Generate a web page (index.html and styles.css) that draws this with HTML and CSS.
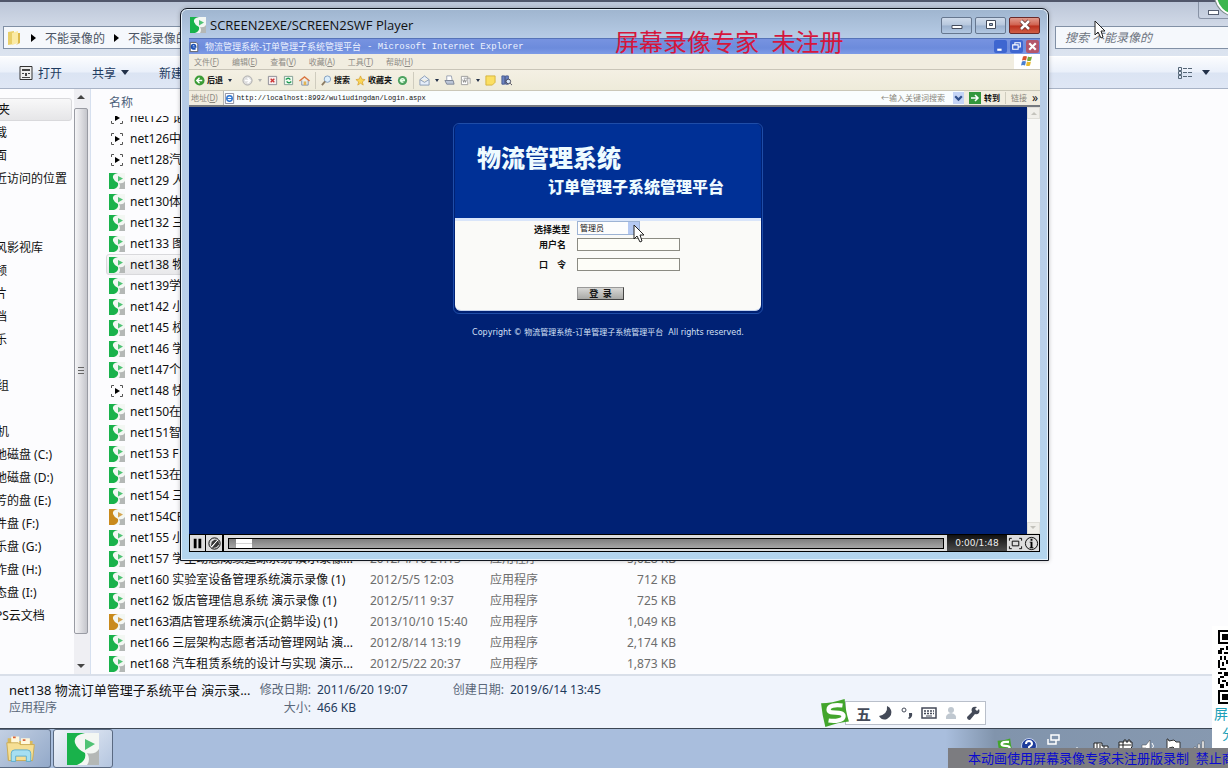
FILE: index.html
```
<!DOCTYPE html>
<html lang="zh-CN">
<head>
  <meta charset="UTF-8">
  <meta name="viewport" content="width=device-width, initial-scale=1.0">
  <title>SCREEN2EXE/SCREEN2SWF Player</title>
  <link rel="stylesheet" href="styles.css">
</head>
<body>
<svg class="sprite" aria-hidden="true">
  <symbol id="i-app" viewBox="0 0 16 16">
    <path fill="#f3f7f3" d="M0 0h16v16H0z"/>
    <path fill="#b4b8b6" d="M10 10q4 1 6-2v8h-6q2-3 0-6z"/>
    <path fill="currentColor" d="M0 0h9Q3 1 4 5q1 3 5 5 1 4-4 6H0z"/>
    <path fill="currentColor" opacity=".75" d="M9 3l5 2.500-5 3z"/>
  </symbol>
  <symbol id="i-play" viewBox="0 0 16 16">
    <path fill="none" stroke="#555" d="M2.500 5V2.500H5M11 2.500h2.500V5M13.500 11v2.500H11M5 13.500H2.500V11"/>
    <path d="M6 5l5 3-5 3z"/>
  </symbol>
  <symbol id="i-cursor" viewBox="0 0 13 20">
    <path fill="#fff" stroke="#222" d="M1 1v14l3-3 3 6 2-1-2-6h4z"/>
  </symbol>
  <symbol id="i-sogou" viewBox="0 0 28 28">
    <path fill="#43a52c" d="M1 5q10 0 22-4 1 12 4 21-10 1-22 5Q2 16 1 5z"/>
    <path fill="none" stroke="#fff" stroke-width="4" d="M21 7C14 6 8 7 8 11c0 5 14 0 14 6 0 4-8 5-14 4"/>
  </symbol>
</svg>

<div class="desktop">
  <div class="explorer">
    <header class="address-row">
      <nav class="path-bar">
        <svg class="icon" viewBox="0 0 16 16"><path fill="#e9cf6a" d="M2 2l6-1v13l-6 1z"/><path fill="#fbeaa4" d="M6 3l6-2v12l-6 2z"/><path fill="#dcb94e" d="M12 3h2v10l-4 2 2-2z"/></svg>
        <span class="crumb-arrow"></span>
        <a href="#">不能录像的</a>
        <span class="crumb-arrow"></span>
        <a href="#">不能录像的</a>
      </nav>
      <input class="search-box" type="text" placeholder="搜索 不能录像的" aria-label="搜索">
      <button class="min-btn" aria-label="最小化"><span></span></button>
    </header>

    <div class="toolbar">
      <button><svg class="icon" viewBox="0 0 16 16"><path fill="#eee" stroke="#333" d="M2 1.500h12v13H2z"/><path fill="#444" d="M4 4h8v2H4zM4 8h2v1H4zM7 8h2v3H7zM10 8h2v1h-2zM4 12h8v1H4z"/></svg>打开</button>
      <button class="share">共享<span class="caret"></span></button>
      <button>新建文件夹</button>
      <button class="view-btn" aria-label="视图"><svg class="icon" viewBox="0 0 16 16"><path fill="none" stroke="#567" d="M1.500 2.500h3v3h-3zM1.500 6.500h3v3h-3zM1.500 10.500h3v3h-3z"/><path stroke="#567" d="M6 3.500h4M11 3.500h4M6 7.500h4M11 7.500h4M6 11.500h4M11 11.500h4"/></svg><span class="caret"></span></button>
    </div>

    <div class="explorer-body">
      <ul class="tree">
        <li class="group active">夹</li>
        <li>载</li>
        <li>面</li>
        <li>近访问的位置</li>
        <li></li>
        <li></li>
        <li>风影视库</li>
        <li>频</li>
        <li>片</li>
        <li>档</li>
        <li>乐</li>
        <li></li>
        <li class="group">组</li>
        <li></li>
        <li class="group">机</li>
        <li>地磁盘 (C:)</li>
        <li>地磁盘 (D:)</li>
        <li>芳的盘 (E:)</li>
        <li>件盘 (F:)</li>
        <li>乐盘 (G:)</li>
        <li>作盘 (H:)</li>
        <li>态盘 (I:)</li>
        <li>PS云文档</li>
      </ul>
      <div class="tree-scroll">
        <span class="arrow up"></span>
        <div class="thumb"><i></i></div>
        <span class="arrow down"></span>
      </div>
      <table class="files">
        <thead><tr><th>名称</th></tr></thead>
        <tbody id="file-rows"></tbody>
      </table>
    </div>

    <footer class="details">
      <div class="detail-name">
        <strong>net138 物流订单管理子系统平台 演示录...</strong>
        <span>应用程序</span>
      </div>
      <dl>
        <dt>修改日期:</dt><dd>2011/6/20 19:07</dd>
        <dt>大小:</dt><dd>466 KB</dd>
      </dl>
      <dl>
        <dt>创建日期:</dt><dd>2019/6/14 13:45</dd>
      </dl>
    </footer>
  </div>

  <div class="taskbar">
    <button class="task" aria-label="资源管理器">
      <svg viewBox="0 0 36 34"><path fill="#d9b95c" d="M3 5h9l2 3h17v22H3z"/><path fill="#fff8dc" d="M7 3h9v8H7zM18 5h10v8H18z"/><path fill="#f6df94" stroke="#c9a850" d="M2 10h13l2 2h16l-2 18H4z"/><path fill="#d9653b" d="M9 3h3v2H9zM20 6h3v2h-3z"/><path fill="#a6dff2" stroke="#58a9cc" d="M7 31v-9q0-4 4-4h14q4 0 4 4v9h-5v-6H12v6z"/></svg>
    </button>
    <button class="task running" aria-label="播放器"><svg class="green" viewBox="0 0 16 16"><use href="#i-app"/></svg></button>
    <div class="tray">
      <svg viewBox="0 0 28 28"><use href="#i-sogou"/></svg>
      <svg viewBox="0 0 16 16"><circle cx="8" cy="8" r="7.500" fill="#1d3c9b" stroke="#c6d2ee"/><path fill="none" stroke="#fff" stroke-width="2" d="M5 6q0-3 3-3t3 3q0 1-3 3v1M8 12v2"/></svg>
      <svg class="raised" viewBox="0 0 16 16"><path fill="none" stroke="#fff" stroke-width="1.500" d="M6 3h8v5H6zM3 7v5h8V8"/></svg>
      <svg viewBox="0 0 16 16"><path fill="#fff" d="M8 9l4 4H4z"/></svg>
      <svg viewBox="0 0 16 16"><path fill="#fff" stroke="#222" d="M1 5h8v3h6v6H5l-4-4z"/><path stroke="#222" d="M4 5v7M7 6v7M11 8v6"/></svg>
      <svg viewBox="0 0 16 16"><path fill="#fff" stroke="#222" d="M2 4h5V2h2v2h2V2h2v2h2v5l-3 3H2z"/><path stroke="#222" d="M2 7h12M6 4v8"/></svg>
      <svg viewBox="0 0 16 16"><path fill="#fff" stroke="#444" stroke-width=".5" d="M1 7h4l4-5v12l-4-4H1z"/><path fill="none" stroke="#fff" d="M11 5q3 3 0 6"/></svg>
      <svg viewBox="0 0 16 16"><path fill="#fff" stroke="#333" d="M2 1h1l1 2 5-1 2 2h4v7h-5L8 9 4 10v5H2z"/></svg>
      <svg viewBox="0 0 16 16"><path fill="#fff" stroke="#555" stroke-width=".5" d="M1 12h2v3H1zM5 9h2v6H5zM9 6h2v9H9zM13 3h2v12h-2z"/></svg>
    </div>
  </div>

  <section class="player">
    <header class="player-title">
      <svg class="green" viewBox="0 0 16 16"><use href="#i-app"/></svg>
      <h1>SCREEN2EXE/SCREEN2SWF Player</h1>
      <button aria-label="最小化"><svg viewBox="0 0 16 12"><path fill="#fff" stroke="#444c5c" d="M3 6.500h10v3H3z"/></svg></button>
      <button aria-label="最大化"><svg viewBox="0 0 16 12"><path fill="#fff" stroke="#444c5c" d="M3.500 1.500h9v8h-9z"/><path fill="#9fb4cf" stroke="#444c5c" d="M6.500 4.500h3v2h-3z"/></svg></button>
      <button class="close" aria-label="关闭"><svg viewBox="0 0 16 12"><path stroke="#5a3030" stroke-width="4" d="M4 2l8 8M12 2l-8 8"/><path stroke="#fff" stroke-width="2.500" d="M4 2l8 8M12 2l-8 8"/></svg></button>
    </header>

    <div class="ie">
      <div class="ie-title">
        <svg viewBox="0 0 12 12"><path fill="#fff" stroke="#555" d="M1.500.5h7l2 2v9h-9z"/><path fill="none" stroke="#1c51b5" stroke-width="2" d="M3 6h5q0-3-2.500-3T3 6t5 2"/></svg>
        <span>物流管理系统-订单管理子系统管理平台</span>
        <span class="latin">- Microsoft Internet Explorer</span>
        <div class="ie-buttons">
          <button aria-label="最小化"><svg viewBox="0 0 12 12"><path fill="#fff" d="M3 8h4v2H3z"/></svg></button>
          <button aria-label="还原"><svg viewBox="0 0 12 12"><path fill="none" stroke="#fff" d="M4.500 4V2.500h5v4H8M2.500 4.500h5v4h-5z"/></svg></button>
          <button class="close" aria-label="关闭"><svg viewBox="0 0 12 12"><path stroke="#fff" stroke-width="2" d="M3 3l6 6M9 3l-6 6"/></svg></button>
        </div>
      </div>

      <div class="ie-menu">
        <a href="#">文件(<u>F</u>)</a>
        <a href="#">编辑(<u>E</u>)</a>
        <a href="#">查看(<u>V</u>)</a>
        <a href="#">收藏(<u>A</u>)</a>
        <a href="#">工具(<u>T</u>)</a>
        <a href="#">帮助(<u>H</u>)</a>
        <div class="flag"><svg viewBox="0 0 14 14"><path fill="#d9532c" d="M3 2q2-1 4 0L6 6Q4 5 2 6z"/><path fill="#77a83a" d="M8 2q2 1 4 0l-1 4q-2 1-4 0z"/><path fill="#4a7fd0" d="M2 7q2-1 4 0l-1 4q-2-1-4 0z"/><path fill="#e8b92e" d="M7 7q2 1 4 0l-1 4q-2 1-4 0z"/></svg></div>
      </div>

      <div class="ie-tools">
        <button><svg viewBox="0 0 12 12"><circle cx="6" cy="6" r="5.500" fill="#3b9c35"/><path fill="none" stroke="#fff" stroke-width="1.500" d="M9 6H3M6 3L3 6l3 3"/></svg>后退</button>
        <span class="caret back-list"></span>
        <button aria-label="前进"><svg viewBox="0 0 12 12"><circle cx="6" cy="6" r="5" fill="#ddd" stroke="#aaa"/><path fill="none" stroke="#fff" stroke-width="1.500" d="M3 6h6M6 3l3 3-3 3"/></svg></button>
        <span class="caret faded"></span>
        <button aria-label="停止"><svg viewBox="0 0 12 12"><path fill="#f7eeee" stroke="#8a8a94" d="M1.500 1.500h9v9h-9z"/><path stroke="#c33" stroke-width="1.500" d="M4 4l4 4M8 4L4 8"/></svg></button>
        <button aria-label="刷新"><svg viewBox="0 0 12 12"><path fill="#effaef" stroke="#7f9a90" d="M1.500 1.500h9v9h-9z"/><path fill="none" stroke="#1f9a52" stroke-width="1.500" d="M3 5q3-3 5 0M9 7q-3 3-5 0"/></svg></button>
        <button aria-label="主页"><svg viewBox="0 0 12 12"><path fill="#e8f0fa" stroke="#7c8ba4" d="M3 6v5h7V6"/><path fill="#d9733e" d="M6 1l6 5-1 1-5-4-5 4-1-1z"/><path fill="#e3b454" d="M5 7h3v4H5z"/></svg></button>
        <i class="sep"></i>
        <button><svg viewBox="0 0 12 12"><circle cx="7" cy="4.500" r="3.500" fill="#dceefb" stroke="#7e9bbd"/><path stroke="#8b7b62" stroke-width="2" d="M4.500 7L1 11"/></svg>搜索</button>
        <button><svg viewBox="0 0 12 12"><path fill="#fbd656" stroke="#d29a25" stroke-width=".7" d="M6 1l1.500 3.500L11 5 8 7.500 9 11 6 9l-3 2 1-3.500L1 5l3.500-.5z"/></svg>收藏夹</button>
        <button aria-label="历史"><svg viewBox="0 0 12 12"><circle cx="6" cy="6" r="5" fill="#4ca15f"/><path fill="none" stroke="#e8ffe8" stroke-width="1.500" d="M3 6h5q0-2-2-2T4 6t3 2"/></svg></button>
        <i class="sep"></i>
        <button aria-label="邮件"><svg viewBox="0 0 12 12"><path fill="#e6eefa" stroke="#8799b4" d="M1 5l5-4 5 4v6H1zM1 5l5 3 5-3"/></svg></button>
        <span class="caret"></span>
        <button aria-label="打印"><svg viewBox="0 0 12 12"><path fill="#fff" stroke="#98a0b0" d="M3 1h5l1 5H3z"/><path fill="#bcc6d8" stroke="#7b8394" d="M1 6h9l1 4H3z"/></svg></button>
        <button aria-label="编辑"><svg viewBox="0 0 12 12"><path fill="#fff" stroke="#999" d="M1.500 1.500h7v9h-7zM4 3.500h7v6"/><path fill="none" stroke="#888" d="M3 5l1 3 1-3 1 3 1-3"/></svg></button>
        <span class="caret"></span>
        <button aria-label="便笺"><svg viewBox="0 0 12 12"><path fill="#fbdf62" stroke="#d5b23a" d="M1 1h10v7l-3 3H1z"/></svg></button>
        <button aria-label="信息检索"><svg viewBox="0 0 12 12"><path fill="#6c84c4" stroke="#46598c" d="M1 1h3v9H1zM5 1h3v9H5z"/><circle cx="8" cy="7" r="2.500" fill="#d9e8fa" stroke="#445"/><path stroke="#445" d="M10 9l2 2"/></svg></button>
      </div>

      <div class="ie-address">
        <label for="url">地址(<u>D</u>)</label>
        <div class="url-field">
          <svg viewBox="0 0 12 12"><path fill="#fff" stroke="#889" d="M1.500.5h9v11h-9z"/><circle cx="6" cy="6" r="3" fill="none" stroke="#2b73d1" stroke-width="1.500"/><path stroke="#2b73d1" d="M3 6h6"/></svg>
          <input id="url" type="text" value="http://localhost:8992/wuliudingdan/Login.aspx">
          <span class="hint">←输入关键词搜索</span>
          <button class="drop" aria-label="展开"><svg viewBox="0 0 10 10"><path fill="none" stroke="#31508c" stroke-width="2" d="M2 3l3 3 3-3"/></svg></button>
        </div>
        <button class="go"><svg viewBox="0 0 12 12"><path fill="#33973c" d="M0 0h12v12H0z"/><path fill="none" stroke="#fff" stroke-width="1.500" d="M2 6h7M6 3l3 3-3 3"/></svg>转到</button>
        <a href="#">链接</a>
        <span class="more">»</span>
      </div>

      <div class="ie-view">
        <main class="page">
          <div class="card">
            <div class="banner">
              <h2>物流管理系统</h2>
              <h3>订单管理子系统管理平台</h3>
            </div>
            <form class="login" onsubmit="return false">
              <label for="role">选择类型</label>
              <select id="role"><option>管理员</option></select>
              <label for="user">用户名</label>
              <input id="user" type="text">
              <label for="pass" class="spaced"><span>口</span><span>令</span></label>
              <input id="pass" type="password">
              <button type="submit">登&nbsp; 录</button>
            </form>
          </div>
          <p class="copyright">Copyright © 物流管理系统-订单管理子系统管理平台&nbsp; All rights reserved.</p>
          <svg class="page-cursor"><use href="#i-cursor"/></svg>
        </main>
        <div class="page-scroll"><span></span><span class="flip"></span></div>
      </div>
    </div>

    <div class="controls">
      <button aria-label="暂停"><svg viewBox="0 0 16 16"><path d="M4 3h3v10H4zM9 3h3v10H9z"/></svg></button>
      <button aria-label="停止"><svg viewBox="0 0 16 16"><circle cx="8" cy="8" r="6" fill="none" stroke="#000"/><path d="M4 12l1-6 3-2h3zM12 4l1 5-3 3-5 1z" opacity=".75"/><path stroke="#fff" d="M4 12l8-8"/></svg></button>
      <div class="track"><input type="range" min="0" max="100" value="1" aria-label="进度"></div>
      <output>0:00/1:48</output>
      <button aria-label="全屏"><svg viewBox="0 0 16 16"><path fill="none" stroke="#000" d="M4.500 5.500h7v5h-7zM1.500 5V2.500H4M12 2.500h2.500V5M14.500 11v2.500H12M4 13.500H1.500V11"/></svg></button>
      <button aria-label="信息"><svg viewBox="0 0 16 16"><circle cx="8" cy="8" r="6.500" fill="none" stroke="#000"/><path d="M7 3h2v2H7zM6 6h3v6h1v1H6v-1h1V7H6z"/></svg></button>
    </div>
  </section>

  <div class="red-mark">屏幕录像专家  未注册</div>

  <div class="ime">
    <svg class="ime-logo" viewBox="0 0 28 28"><use href="#i-sogou"/></svg>
    <div class="ime-bar">
      <b>五</b>
      <svg viewBox="0 0 16 16"><path fill="#444a58" d="M10 1q1 8-8 10 3 5 8 3 6-4 4-9-1-3-4-4z"/></svg>
      <svg viewBox="0 0 16 16"><circle cx="5" cy="5" r="2" fill="none" stroke="#444a58"/><path fill="#444a58" d="M10 8h3q1 4-3 6l-1-1q2-1 1-3z"/></svg>
      <svg viewBox="0 0 16 16"><path fill="none" stroke="#444a58" stroke-width="1.500" d="M1 3h14v10H1z"/><path stroke="#444a58" stroke-width="1.500" stroke-dasharray="2 1" d="M3 6h10M3 8.500h10"/><path stroke="#444a58" d="M5 11h6"/></svg>
      <svg viewBox="0 0 16 16"><circle cx="8" cy="5" r="3" fill="#c0c8d0"/><path fill="#c0c8d0" d="M3 14q-1-5 5-6 6 1 5 6z"/></svg>
      <svg viewBox="0 0 16 16"><path fill="#444a58" d="M14 4l-2 2-2-2 2-2q-3-1-5 1-1 2 0 4l-5 5q0 3 3 3l5-6q2 1 4-1 1-2 0-4z"/></svg>
    </div>
  </div>

  <aside class="qr">
    <svg viewBox="0 0 10 74"><path fill="none" stroke="#000" stroke-width="2" d="M14 1H1v12h13M14 61H1v12h13"/><path d="M4 4h6v6H4zM4 64h6v6H4zM2 18h4v2H2zM8 16h2v4H8zM0 20h4v4H0zM6 22h4v2H6zM2 26h2v4H2zM0 30h2v8H0zM6 26h2v4H6zM8 30h2v4H8zM4 32h2v4H4zM2 38h6v2H2zM0 42h4v2H0zM6 42h4v4H6zM2 46h4v2H2zM0 48h2v6H0zM4 50h4v2H4zM8 52h2v4H8zM2 54h4v4H2z"/></svg>
    <span>屏</span>
    <span>分</span>
  </aside>

  <div class="notice">本动画使用屏幕录像专家未注册版录制  禁止商</div>
  <div class="ball"></div>
  <svg class="desk-cursor"><use href="#i-cursor"/></svg>
</div>

<script>
const files = [
  ['play', 'net125 论'],
  ['play', 'net126中'],
  ['play', 'net128汽'],
  ['green', 'net129 人'],
  ['green', 'net130体'],
  ['green', 'net132 三'],
  ['green', 'net133 图'],
  ['green', 'net138 物'],
  ['green', 'net139学'],
  ['green', 'net142 小'],
  ['green', 'net145 校'],
  ['green', 'net146 学'],
  ['green', 'net147个'],
  ['play', 'net148 快'],
  ['green', 'net150在'],
  ['green', 'net151智'],
  ['green', 'net153 F'],
  ['green', 'net153在'],
  ['green', 'net154 三'],
  ['orange', 'net154CR'],
  ['green', 'net155 小'],
  ['green', 'net157 学生动态成绩追踪系统 演示录像...', '2012/4/16 21:13', '应用程序', '5,028 KB'],
  ['green', 'net160 实验室设备管理系统演示录像 (1)', '2012/5/5 12:03', '应用程序', '712 KB'],
  ['green', 'net162 饭店管理信息系统 演示录像 (1)', '2012/5/11 9:37', '应用程序', '725 KB'],
  ['orange', 'net163酒店管理系统演示(企鹅毕设) (1)', '2013/10/10 15:40', '应用程序', '1,049 KB'],
  ['green', 'net166 三层架构志愿者活动管理网站 演...', '2012/8/14 13:19', '应用程序', '2,174 KB'],
  ['green', 'net168 汽车租赁系统的设计与实现 演示...', '2012/5/22 20:37', '应用程序', '1,873 KB']
];

document.getElementById('file-rows').innerHTML = files.map(([kind, name, date = '', type = '', size = '']) => `
  <tr class="${name.startsWith('net138') ? 'selected' : ''}">
    <td class="name"><svg class="${kind}" viewBox="0 0 16 16"><use href="#i-${kind === 'play' ? 'play' : 'app'}"/></svg>${name}</td>
    <td>${date}</td>
    <td>${type}</td>
    <td class="size">${size}</td>
  </tr>`).join('');
</script>
</body>
</html>
```
FILE: styles.css
```
* {
  box-sizing: border-box;
}
body {
  margin: 0;
  font-family: "Noto Sans", "Noto Sans CJK SC", sans-serif;
  font-size: 12px;
  color: #111;
}
button, input, select {
  font: inherit;
  color: inherit;
  margin: 0;
  padding: 0;
  border: 0;
  background: none;
}
a {
  color: inherit;
  text-decoration: none;
}
h1, h2, h3, p, ul, dl, dd {
  margin: 0;
  padding: 0;
}
svg {
  flex: none;
  display: block;
}
.sprite {
  position: absolute;
  width: 0;
  height: 0;
}
.icon {
  width: 16px;
  height: 16px;
}
.green {
  color: #19b24b;
}
.orange {
  color: #c98a1c;
}
.caret {
  border: 4px solid transparent;
  border-top: 5px solid #223048;
  border-bottom: 0;
}
.desktop {
  position: relative;
  height: 100vh;
  overflow: hidden;
  display: flex;
  flex-direction: column;
}

/* explorer window */
.explorer {
  flex: 1;
  min-height: 0;
  display: flex;
  flex-direction: column;
  background: #fcfcfe;
  border-top: 2px solid #50566a;
}
.address-row {
  height: 54px;
  display: flex;
  align-items: flex-end;
  padding: 0 0 7px 3px;
  background: linear-gradient(#bcc6d8, #d6deeb 55%, #dce4f0);
}
.path-bar, .search-box {
  height: 23px;
  border: 1px solid #8190a5;
  background: #f5f8fc;
}
.path-bar {
  flex: 1;
  display: flex;
  align-items: center;
  gap: 9px;
  padding-left: 2px;
  color: #4c5564;
}
.crumb-arrow {
  border: 4px solid transparent;
  border-left: 5px solid #000;
  border-right: 0;
}
.search-box {
  width: 185px;
  margin-left: 10px;
  margin-right: -12px;
  padding-left: 9px;
  font-style: italic;
}
.search-box::placeholder {
  color: #6d7480;
}
.min-btn {
  align-self: flex-start;
  width: 42px;
  height: 17px;
  margin: 0 -12px 0 -30px;
  padding: 8px 9px;
  border: 1px solid #8893a6;
  border-top: 0;
  border-radius: 0 0 0 3px;
}
.min-btn span {
  display: block;
  width: 11px;
  height: 5px;
  border: 1px solid #555e70;
  background: #fff;
}
.toolbar {
  height: 33px;
  display: flex;
  align-items: center;
  gap: 30px;
  padding: 0 18px;
  color: #1e3a5f;
  background: linear-gradient(#fbfcfe, #eaf0fa 48%, #dbe4f3 52%, #dfe7f5);
  border-top: 1px solid #fff;
  border-bottom: 1px solid #a8b3c6;
}
.toolbar button {
  display: flex;
  align-items: center;
  gap: 4px;
}
.toolbar .share {
  gap: 5px;
}
.toolbar .view-btn {
  margin-left: auto;
  gap: 9px;
}
.explorer-body {
  flex: 1;
  min-height: 0;
  display: flex;
}
.tree {
  width: 74px;
  padding-top: 9px;
  list-style: none;
  overflow: hidden;
}
.tree li {
  height: 23px;
  line-height: 23px;
  margin-left: -5px;
  white-space: nowrap;
}
.tree .group {
  margin-left: -3px;
}
.tree .active {
  margin-right: 2px;
  line-height: 21px;
  border: 1px solid #d9d9dc;
  border-radius: 3px;
  background: linear-gradient(#f8f8f9, #e6e6e8);
}
.tree-scroll {
  width: 17px;
  display: flex;
  flex-direction: column;
  align-items: center;
  padding: 6px 2px 6px 0;
  border-right: 1px solid #d6e0ef;
  background: #efeff3;
}
.arrow {
  border: 4px solid transparent;
}
.arrow.up {
  border-top: 0;
  border-bottom: 4px solid #444;
}
.arrow.down {
  border-bottom: 0;
  border-top: 4px solid #444;
}
.thumb {
  width: 14px;
  flex: 1;
  margin: 9px 0 30px;
  display: flex;
  align-items: center;
  justify-content: center;
  border: 1px solid #999ba3;
  border-radius: 2px;
  background: linear-gradient(90deg, #f5f5f7, #e0e0e4 45%, #c4c5cb);
}
.thumb i {
  width: 6px;
  height: 8px;
  background: repeating-linear-gradient(#666 0 1px, transparent 1px 3px);
}
.files {
  flex: 1;
  min-width: 0;
  display: flex;
  flex-direction: column;
  padding-left: 15px;
}
.files thead {
  display: block;
  height: 27px;
  line-height: 24px;
  padding-left: 1px;
  color: #4c607a;
}
.files th {
  padding: 0;
  font-weight: normal;
}
.files tbody {
  flex: 1;
  min-height: 0;
  display: flex;
  flex-direction: column;
  justify-content: flex-end;
  overflow: hidden;
}
.files tr {
  flex: none;
}
.files tbody tr {
  width: 573px;
  display: grid;
  grid-template-columns: 263px 120px 116px 70px;
  height: 21px;
  line-height: 19px;
  border: 1px solid transparent;
  border-radius: 3px;
}
.files .selected {
  border-color: #d9d9dc;
  background: linear-gradient(#f8f8f9, #e8e8ea);
}
.files td {
  padding: 0;
  color: #6d6d6d;
  white-space: nowrap;
}
.files .name {
  display: flex;
  align-items: center;
  gap: 5px;
  padding-left: 2px;
  color: #111;
}
.files .name svg {
  width: 16px;
  height: 16px;
}
.files .size {
  text-align: right;
}
.details {
  height: 54px;
  display: flex;
  align-items: flex-start;
  padding: 5px 9px;
  line-height: 18px;
  background: #f0f4fc;
  border-top: 2px solid #d9dfe9;
  color: #5a6779;
  white-space: nowrap;
}
.detail-name {
  width: 250px;
  display: flex;
  flex-direction: column;
}
.detail-name strong {
  font-size: 13px;
  font-weight: normal;
  color: #111;
}
.details dl {
  display: grid;
  grid-template-columns: 52px 135px;
  column-gap: 6px;
}
.details dt {
  text-align: right;
}
.details dd {
  color: #1e395b;
}

/* taskbar */
.taskbar {
  height: 40px;
  display: flex;
  gap: 2px;
  border-top: 1px solid #3c4654;
  background: linear-gradient(90deg, #a9bedd 77%, #8194ac 81%, #8799b0);
}
.task {
  width: 51px;
  display: flex;
  align-items: center;
  justify-content: center;
  padding-right: 9px;
  border: 1px solid #5a6a82;
  border-left: 0;
  border-radius: 0 3px 3px 0;
  background: linear-gradient(135deg, #c3d0e3, #93a9c9);
}
.task svg {
  width: 32px;
  height: 32px;
}
.task.running {
  width: 60px;
  padding: 0;
  border: 1px solid #5a6a82;
  border-radius: 3px;
  background: linear-gradient(135deg, #f0f4fa, #b4c5df);
}
.tray {
  margin-left: auto;
  display: flex;
  gap: 8px;
  padding: 9px 23px 0 0;
}
.tray svg {
  width: 16px;
  height: 16px;
}
.tray .raised {
  margin-top: -6px;
}

/* player window floating over the explorer */
.player {
  position: absolute;
  top: 8px;
  left: 180px;
  right: 179px;
  bottom: 207px;
  display: flex;
  flex-direction: column;
  padding: 1px 8px 8px;
  border: 1px solid #10151f;
  border-radius: 7px 7px 0 0;
  box-shadow: inset 0 0 0 1px #e6f1fb, 0 0 4px rgba(0,0,0,0.25);
  background: linear-gradient(#9fb5cf, #b6cbe5 28px, #bad0ea 60%, #b4d5ee);
}
.player-title {
  height: 28px;
  display: flex;
  align-items: center;
  gap: 3px;
  padding: 2px 0 0 1px;
}
.player-title > svg {
  width: 16px;
  height: 16px;
}
.player-title h1 {
  flex: 1;
  padding-left: 1px;
  font-family: "Open Sans", "Noto Sans", sans-serif;
  font-size: 13px;
  font-weight: normal;
}
.player-title button {
  width: 31px;
  height: 17px;
  display: flex;
  align-items: center;
  justify-content: center;
  border: 1px solid #66778f;
  border-radius: 2px;
  background: linear-gradient(#cfdbeb, #b6c7dd 48%, #9bb1ce 52%, #b3c8e2);
}
.player-title .close {
  border-color: #6b2a2a;
  background: linear-gradient(#e19a8d, #d0604d 48%, #bb2f1c 52%, #d05e46);
}
.player-title svg {
  width: 16px;
}
.ie {
  flex: 1;
  min-height: 0;
  display: flex;
  flex-direction: column;
  font-size: 8px;
  line-height: 12px;
  background: #f1ede0;
}
.ie-title {
  height: 16px;
  display: flex;
  align-items: center;
  gap: 6px;
  padding: 0 1px 0 0;
  font-size: 9px;
  color: #eef3ff;
  border-top: 1px solid #5573b8;
  background: linear-gradient(#7793e0, #6c8bdc 60%, #7d9be6);
  white-space: nowrap;
}
.ie-title > svg {
  width: 10px;
  height: 12px;
}
.ie-title .latin {
  font-family: "Liberation Mono", monospace;
}
.ie-buttons {
  margin-left: auto;
  display: flex;
  gap: 3px;
}
.ie-buttons button {
  width: 13px;
  height: 13px;
  border-radius: 2px;
  background: #3e66d0;
}
.ie-buttons .close {
  background: #b3566c;
}
.ie-menu {
  height: 16px;
  display: flex;
  align-items: center;
  gap: 13px;
  padding-left: 5px;
  color: #8e8c86;
  border-bottom: 1px solid #c9c5b8;
}
.flag {
  width: 26px;
  height: 15px;
  margin-left: auto;
  display: flex;
  justify-content: center;
  background: #fff;
}
.flag svg {
  width: 14px;
}
.ie-tools {
  height: 21px;
  display: flex;
  align-items: center;
  gap: 5px;
  padding-left: 5px;
  background: linear-gradient(#f4f0e4, #eeebda);
  border-bottom: 1px solid #cac7b8;
}
.ie-tools button {
  display: flex;
  align-items: center;
  gap: 2px;
  font-weight: bold;
}
.ie-tools svg {
  width: 11px;
  height: 11px;
}
.ie-tools .caret {
  border-width: 3px 2px 0;
}
.ie-tools .back-list {
  margin-right: 5px;
}
.ie-tools .faded {
  opacity: 0.3;
}
.sep {
  width: 1px;
  height: 17px;
  background: #cfccbe;
}
.ie-address {
  height: 16px;
  display: flex;
  align-items: center;
  gap: 5px;
  padding: 0 2px;
  color: #8a877d;
  border-bottom: 2px solid #767a80;
}
.url-field {
  flex: 1;
  align-self: stretch;
  display: flex;
  align-items: center;
  gap: 2px;
  background: #f9fdfe;
  border-left: 1px solid #b7b8b4;
}
.url-field svg {
  width: 11px;
  height: 11px;
}
.url-field input {
  flex: 1;
  min-width: 0;
  font-family: "Liberation Mono", monospace;
  font-size: 7px;
  color: #111;
}
.url-field .drop {
  width: 11px;
  height: 12px;
  margin-left: 6px;
  background: #c4d4f6;
}
.go {
  display: flex;
  align-items: center;
  gap: 3px;
  font-weight: bold;
  color: #111;
}
.go svg {
  width: 12px;
  height: 12px;
}
.ie-address > a {
  padding-left: 5px;
  border-left: 1px solid #cfccbe;
}
.more {
  font-size: 12px;
  color: #111;
}
.ie-view {
  flex: 1;
  min-height: 0;
  display: flex;
}
.page {
  position: relative;
  flex: 1;
  display: flex;
  flex-direction: column;
  align-items: center;
  padding-top: 16px;
  background: #002174;
}
.page-scroll {
  width: 13px;
  display: flex;
  flex-direction: column;
  justify-content: space-between;
  background: #f8f8f6;
}
.page-scroll span {
  height: 12px;
  border: 1px solid #dfded8;
  background: #f0efea;
  display: flex;
  align-items: center;
  justify-content: center;
}
.page-scroll span::before {
  content: "";
  border: 3px solid transparent;
  border-top: 0;
  border-bottom-color: #c4c3bc;
}
.page-scroll .flip {
  transform: rotate(180deg);
}

/* login card */
.card {
  width: 310px;
  padding: 0 1px 2px;
  border: 1px solid #1f4da8;
  border-radius: 6px;
}
.banner {
  height: 94px;
  padding: 16px 0 0 22px;
  color: #eefbff;
  border-radius: 5px 5px 0 0;
  background: #003096;
  white-space: nowrap;
}
.banner h2 {
  font-size: 24px;
  line-height: 36px;
  font-weight: 900;
}
.banner h3 {
  padding-left: 71px;
  font-size: 16px;
  line-height: 22px;
  font-weight: 900;
}
.login {
  display: grid;
  grid-template-columns: 115px 103px;
  column-gap: 7px;
  align-items: center;
  padding-bottom: 10px;
  font-size: 9px;
  background: #fafaf8;
  border-top: 3px solid #d9e5fa;
  border-bottom: 1px solid #c2d2ee;
  border-radius: 0 0 6px 6px;
}
.login label {
  justify-self: end;
  padding-right: 4px;
  font-weight: bold;
}
.login label[for="role"] {
  padding-right: 0;
}
.login .spaced {
  width: 31px;
  display: flex;
  justify-content: space-between;
}
.login input, .login select {
  height: 13px;
  border: 1px solid #8b8b83;
  background: #fdfdf8;
}
.login select {
  width: 63px;
  height: 14px;
  margin-bottom: 3px;
  padding-left: 2px;
  font-size: 8px;
  appearance: none;
  border-color: #9db3d4;
  background: linear-gradient(#b5c9f2, #b5c9f2) right / 11px 100% no-repeat #fdfdfd;
}
.login #pass {
  margin: 7px 0;
}
.login button {
  grid-column: 2;
  width: 47px;
  height: 13px;
  margin-top: 9px;
  line-height: 11px;
  font-weight: bold;
  border: 1px solid #444;
  border-top-color: #999;
  border-left-color: #999;
  background: linear-gradient(#d8d8d6, #a9a9a6);
}
.copyright {
  margin-top: 13px;
  font-family: "DejaVu Sans", "Noto Sans CJK SC", sans-serif;
  font-size: 8px;
  color: #d5e0f7;
  white-space: nowrap;
}
.page-cursor {
  position: absolute;
  top: 117px;
  left: 444px;
  width: 13px;
  height: 20px;
}

/* player controls */
.controls {
  height: 18px;
  display: flex;
  align-items: stretch;
  border: 1px solid #000;
  background: #dcdcdc;
}
.controls button {
  width: 16px;
  display: flex;
  align-items: center;
  justify-content: center;
}
.controls button:first-child {
  border-right: 1px solid #000;
}
.controls svg {
  width: 15px;
  height: 15px;
}
.track {
  flex: 1;
  display: flex;
  align-items: center;
  padding: 0 3px 0 4px;
  border-left: 2px solid #000;
}
.track input {
  width: 100%;
  height: 11px;
  appearance: none;
  border: 1px solid #000;
  background: linear-gradient(#7e7e7e, #a6a6a6);
}
.track input::-webkit-slider-thumb {
  appearance: none;
  width: 16px;
  height: 9px;
  background: linear-gradient(#fff 45%, #d5d5d5 50%, #fff 55%);
}
.controls output {
  width: 60px;
  line-height: 16px;
  text-align: center;
  font-family: "DejaVu Sans", sans-serif;
  font-size: 9px;
  color: #eee;
  background: linear-gradient(#111, #4a4a4a);
}

/* things drawn over the windows */
.red-mark {
  position: absolute;
  top: 24px;
  left: 615px;
  font-size: 24px;
  line-height: 36px;
  color: #d5163c;
  white-space: pre;
}
.ime {
  position: absolute;
  right: 242px;
  bottom: 40px;
  display: flex;
  align-items: center;
}
.ime-logo {
  width: 30px;
  height: 30px;
  margin-right: -5px;
  z-index: 1;
}
.ime-bar {
  height: 24px;
  display: flex;
  align-items: center;
  gap: 6px;
  padding: 0 4px 0 10px;
  border: 1px solid #b9bfca;
  background: #fff;
}
.ime-bar b {
  font-size: 15px;
  color: #444a58;
}
.ime-bar svg {
  width: 16px;
  height: 16px;
}
.qr {
  position: absolute;
  right: 0;
  bottom: 20px;
  width: 16px;
  height: 122px;
  padding: 4px 0 0 2px;
  overflow: hidden;
  background: #fff;
  color: #1c9fb8;
  font-size: 14px;
  line-height: 20px;
}
.qr svg {
  width: 10px;
  height: 74px;
  margin-left: 4px;
}
.qr span {
  display: block;
}
.qr span + span {
  padding-left: 8px;
}
.notice {
  position: absolute;
  right: 0;
  bottom: 0;
  width: 280px;
  height: 20px;
  padding-left: 20px;
  overflow: hidden;
  font-size: 13px;
  line-height: 20px;
  color: #0a0ad0;
  background: #7c7c80;
  white-space: pre;
}
.ball {
  position: absolute;
  top: -26px;
  right: -29px;
  width: 42px;
  height: 42px;
  border: 2px solid #fff;
  border-radius: 50%;
  background: #3db64e;
  box-shadow: 0 0 0 1px #7d8b8b;
}
.desk-cursor {
  position: absolute;
  top: 20px;
  left: 1094px;
  width: 13px;
  height: 20px;
}
```
